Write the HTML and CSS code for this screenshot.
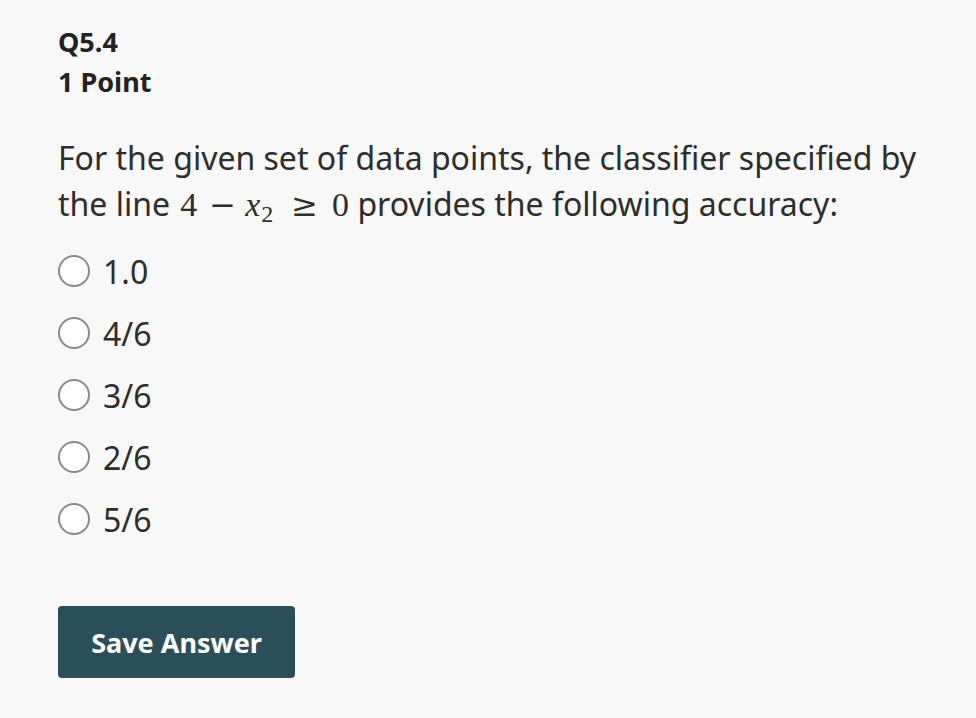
FILE: index.html
```html
<!DOCTYPE html>
<html lang="en">
    <head>
        <meta charset="UTF-8" />
        <link rel="stylesheet" href="styles.css">
    </head>
    <body>
        <div class="question">
            <div class="q_head">
                <div class="q_title">Q5.4</div>
                <div class="q_points">1 Point</div>
            </div>
            <p class="q_text">For the given set of data points, the classifier specified by the line <span class="math"><span class="num">4</span><span class="op bin">&minus;</span><i class="var">x</i><sub>2</sub><span class="op rel">&ge;</span><span class="num">0</span></span> provides the following accuracy:</p>
            <div class="options">
                <label class="option"><span class="radio"></span><span class="opt_text">1.0</span></label>
                <label class="option"><span class="radio"></span><span class="opt_text">4/6</span></label>
                <label class="option"><span class="radio"></span><span class="opt_text">3/6</span></label>
                <label class="option"><span class="radio"></span><span class="opt_text">2/6</span></label>
                <label class="option"><span class="radio"></span><span class="opt_text">5/6</span></label>
            </div>
            <button class="save_btn">Save Answer</button>
        </div>
    </body>
</html>
```

FILE: styles.css
```css
body {
    margin: 0;
    background-color: #f8f8f8;
    color: #2d2d2d;
    font-family: "Noto Sans", "Open Sans", sans-serif;
}
.question {
    padding: 22px 40px 0 58px;
}
.q_head {
    font-size: 27px;
    font-weight: bold;
    line-height: 40px;
    color: #222;
}
.q_text {
    font-size: 32px;
    line-height: 46px;
    margin: 33px 0 12px 0;
}
.math {
    font-family: "Liberation Serif", "DejaVu Serif", serif;
    font-size: 34px;
    margin-left: 2px;
}
.math .var { font-size: 34px; }
.math sub {
    font-size: 24px;
    vertical-align: -6px;
    line-height: 0;
    margin-left: 1px;
}
.op {
    font-family: "DejaVu Serif", serif;
    font-size: 32px;
}
.bin { margin: 0 9px 0 12px; }
.rel { margin: 0 14px 0 18px; }
.options {
    display: flex;
    flex-direction: column;
}
.option {
    display: flex;
    align-items: center;
    height: 62px;
    font-size: 32px;
}
.radio {
    width: 28px;
    height: 28px;
    border: 2px solid #8a8a8a;
    border-radius: 50%;
    background: #fff;
    margin-right: 13px;
}
.save_btn {
    margin-top: 56px;
    width: 237px;
    height: 72px;
    background-color: #2a4f5b;
    color: #fff;
    border: none;
    border-radius: 4px;
    font-family: "Noto Sans", "Open Sans", sans-serif;
    font-size: 27px;
    font-weight: bold;
}
```
